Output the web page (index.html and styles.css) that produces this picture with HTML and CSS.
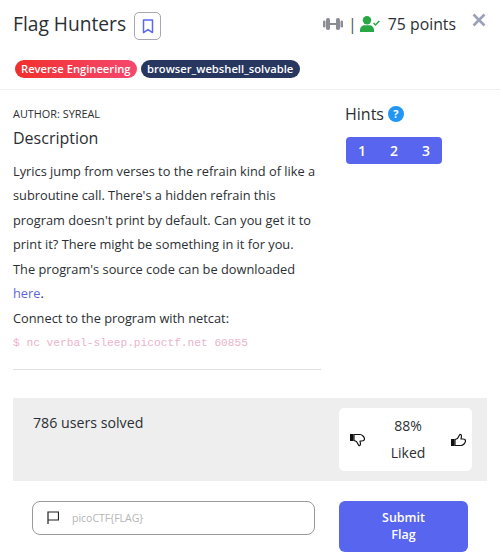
FILE: index.html
```html
<!DOCTYPE html>
<html lang="en">
<head>
<meta charset="utf-8">
<title>Flag Hunters</title>
<link rel="stylesheet" href="styles.css">
</head>
<body>
<div class="modal">
  <header class="head">
    <div class="title-row">
      <h1 class="title">Flag Hunters</h1>
      <button class="bookmark" aria-label="Bookmark">
        <svg width="12" height="15" viewBox="0 0 12 15"><path d="M1.500 1h9v12.600L6 10.600l-4.500 3z" fill="none" stroke="#5a67ee" stroke-width="1.500" stroke-linejoin="round"/></svg>
      </button>
      <div class="meta">
        <svg class="dumbbell" width="20" height="14" viewBox="0 0 20 14"><g fill="#8b8d94"><rect x="0" y="3.500" width="2.500" height="7" rx="1.200"/><rect x="3" y="1" width="4" height="12" rx="1.800"/><rect x="7" y="6" width="6" height="2"/><rect x="13" y="1" width="4" height="12" rx="1.800"/><rect x="17.500" y="3.500" width="2.500" height="7" rx="1.200"/></g></svg>
        <span class="sep">|</span>
        <svg class="solved" width="20" height="16" viewBox="0 0 20 16"><g fill="#28a745"><circle cx="7" cy="4.200" r="4.200"/><path d="M0 16v-2c0-3 2.500-4.800 4.500-4.800h5C11.500 9.200 14 11 14 14v2z"/></g><path d="M13.500 7l2 2 3.800-4" fill="none" stroke="#28a745" stroke-width="1.500"/></svg>
        <span class="points">75 points</span>
      </div>
      <svg class="close" width="14" height="14" viewBox="0 0 14 14"><path d="M1.500 1.500l11 11M12.500 1.500l-11 11" stroke="#9aa1b8" stroke-width="2.600" fill="none"/></svg>
    </div>
    <div class="tags">
      <span class="tag tag-red">Reverse Engineering</span>
      <span class="tag tag-navy">browser_webshell_solvable</span>
    </div>
  </header>
  <main class="body">
    <section class="left">
      <div class="author">AUTHOR: SYREAL</div>
      <h2 class="subhead">Description</h2>
      <p class="desc">Lyrics jump from verses to the refrain kind of like a subroutine call. There's a hidden refrain this program doesn't print by default. Can you get it to print it? There might be something in it for you. The program's source code can be downloaded <a class="link" href="#">here</a>.</p>
      <p class="desc">Connect to the program with netcat:</p>
      <code class="cmd">$ nc verbal-sleep.picoctf.net 60855</code>
      <hr class="rule">
    </section>
    <aside class="right">
      <h2 class="subhead hints-head">Hints <span class="help">?</span></h2>
      <div class="hints"><span>1</span><span>2</span><span>3</span></div>
    </aside>
  </main>
  <section class="stats">
    <div class="users">786 users solved</div>
    <div class="likes">
      <svg class="thumb-l" width="15" height="14" viewBox="0 0 15 14"><path d="M0 1h3.500v7H0z" fill="#111"/><path d="M4 1.500h6c2 0 4.500 2.500 4.500 4.500 0 1.300-1 2-2.500 2H10l.5 3c0 1.500-1.500 2-2 1L6.500 8.500 4 7.500z" fill="#fff" stroke="#111" stroke-width="1.200" stroke-linejoin="round"/></svg>
      <div class="pct"><div>88%</div><div>Liked</div></div>
      <svg class="thumb-r" width="15" height="14" viewBox="0 0 15 14"><path d="M0 6h3.500v7H0z" fill="#111"/><path d="M4 12.500h6c2 0 4.500-2.500 4.500-4.500 0-1.300-1-2-2.500-2H10l.5-3c0-1.500-1.500-2-2-1L6.500 5.500 4 6.500z" fill="#fff" stroke="#111" stroke-width="1.200" stroke-linejoin="round"/></svg>
    </div>
  </section>
  <form class="submit">
    <label class="field">
      <svg width="12" height="13" viewBox="0 0 12 13"><path d="M1 13V1h10.500v8H1" fill="none" stroke="#222" stroke-width="1.200"/></svg>
      <span class="placeholder">picoCTF{FLAG}</span>
    </label>
    <button class="send" type="button">Submit Flag</button>
  </form>
</div>
</body>
</html>
```
FILE: styles.css
```css
* { box-sizing: border-box; }
html, body { margin: 0; padding: 0; background: #fff; }
body { width: 503px; height: 552px; overflow: hidden; font-family: "Open Sans", sans-serif; color: #2b2f33; }
.modal { width: 500px; }
.head { height: 90px; padding: 12px 14px 0 13px; border-bottom: 1px solid #eceef0; }
.title-row { display: flex; align-items: flex-start; height: 28px; }
.title { margin: 0; font-size: 19.200px; font-weight: 400; line-height: 24px; }
.bookmark { margin: 0 0 0 8px; width: 27px; height: 28px; padding: 0; display: flex; align-items: center; justify-content: center; background: #fff; border: 1px solid #a6a8b0; border-radius: 5px; }
.meta { margin-left: auto; display: flex; align-items: center; height: 24px; margin-right: 1px; }
.sep { font-size: 16px; color: #555; margin-left: 5px; }
.solved { margin-left: 3px; }
.points { font-size: 15.800px; margin-left: 8px; }
.close { margin-left: 15px; margin-top: 1px; }
.tags { display: flex; gap: 4px; margin-top: 20px; padding-left: 2px; }
.tag { height: 18px; line-height: 18px; border-radius: 9px; padding: 0 6px; font-size: 11.200px; font-weight: 600; color: #fff; white-space: nowrap; }
.tag-red { background: linear-gradient(90deg, #f1302c, #f5486f); }
.tag-navy { background: #27375f; padding: 0 6.500px; }
.body { display: flex; padding: 0 13px; }
.left { width: 308px; padding-top: 16px; }
.author { font-size: 10.880px; line-height: 16px; }
.subhead { margin: 0; font-size: 16px; font-weight: 400; line-height: 22px; }
.left .subhead { margin-top: 5px; }
.desc { margin: 9.500px 0 0; max-width: 304px; font-size: 12.800px; line-height: 24.500px; }
.desc + .desc { margin-top: 0; }
.link { color: #5a67d8; text-decoration: none; }
.cmd { display: block; margin-top: 4.500px; font-family: "Liberation Mono", monospace; font-size: 11.200px; line-height: 16px; color: #ecb3cb; }
.rule { margin: 18px 0 0; border: 0; border-top: 1px solid #dfe0e2; }
.right { margin-left: 24px; padding-top: 13px; }
.hints-head { display: flex; align-items: center; gap: 4px; }
.help { width: 16px; height: 16px; border-radius: 50%; background: #2196f3; color: #fff; font-size: 11px; font-weight: 700; line-height: 16px; text-align: center; }
.hints { margin: 12px 0 0 1px; width: 96px; height: 27px; display: flex; background: #5865ef; border-radius: 4px; color: #fff; font-size: 14px; font-weight: 600; line-height: 27px; }
.hints span { flex: 1; text-align: center; }
.stats { margin: 28px 0 0 13px; width: 474px; height: 83px; background: #eee; display: flex; justify-content: space-between; padding: 10px 15px 10px 20px; }
.users { font-size: 14.200px; line-height: 29px; }
.likes { width: 133px; height: 63px; background: #fff; border-radius: 5px; display: grid; grid-template-columns: 1fr auto 1fr; align-items: center; padding: 0 6px 0 11px; font-size: 14px; }
.likes svg { margin-top: 2px; }
.thumb-r { justify-self: end; }
.pct { text-align: center; line-height: 27px; }
.submit { display: flex; padding: 20px 0 0 32px; align-items: flex-start; }
.field { width: 283px; height: 34px; border: 1px solid #999; border-radius: 8px; display: flex; align-items: center; gap: 13px; padding-left: 14px; }
.placeholder { font-size: 10.500px; color: #b5b5b5; }
.send { margin-left: 24px; width: 129px; height: 51px; border: 0; border-radius: 6px; background: #5865ef; color: #fff; padding: 0 30px; font: 600 12.500px/17px "Open Sans", sans-serif; }
```
